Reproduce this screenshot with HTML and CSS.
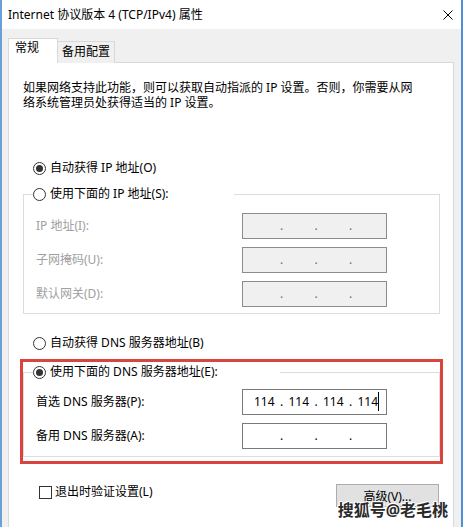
FILE: index.html
```html
<!DOCTYPE html>
<html lang="zh-CN">
<head>
<meta charset="utf-8">
<title>Internet 协议版本 4 (TCP/IPv4) 属性</title>
<link rel="stylesheet" href="styles.css">
</head>
<body>
<div class="window">
  <header class="titlebar">
    <span class="title">Internet 协议版本 4 (TCP/IPv4) 属性</span>
    <button class="close" type="button" aria-label="关闭">
      <svg width="10" height="10" viewBox="0 0 10 10"><path d="M0.5 0.5 L9.5 9.5 M9.5 0.5 L0.5 9.5" stroke="#000" stroke-width="1"/></svg>
    </button>
  </header>

  <div class="client">
    <div class="tabs">
      <div class="tab active">常规</div>
      <div class="tab">备用配置</div>
    </div>

    <div class="panel">
      <p class="desc">如果网络支持此功能，则可以获取自动指派的 IP 设置。否则，你需要从网<br>络系统管理员处获得适当的 IP 设置。</p>

      <label class="radio indent"><input type="radio" name="ip" checked><span>自动获得 IP 地址(O)</span></label>

      <fieldset class="group ip-group">
        <legend class="legend-ip"><label class="radio"><input type="radio" name="ip"><span>使用下面的 IP 地址(S):</span></label></legend>
        <div class="rows rows-ip">
          <span class="lbl disabled">IP 地址(I):</span>
          <div class="ipbox off"><span class="oct"></span><span class="dot">.</span><span class="oct"></span><span class="dot">.</span><span class="oct"></span><span class="dot">.</span><span class="oct"></span></div>
          <span class="lbl disabled">子网掩码(U):</span>
          <div class="ipbox off"><span class="oct"></span><span class="dot">.</span><span class="oct"></span><span class="dot">.</span><span class="oct"></span><span class="dot">.</span><span class="oct"></span></div>
          <span class="lbl disabled">默认网关(D):</span>
          <div class="ipbox off"><span class="oct"></span><span class="dot">.</span><span class="oct"></span><span class="dot">.</span><span class="oct"></span><span class="dot">.</span><span class="oct"></span></div>
        </div>
      </fieldset>

      <label class="radio indent dns-auto"><input type="radio" name="dns"><span>自动获得 DNS 服务器地址(B)</span></label>

      <div class="highlight">
        <fieldset class="group dns-group">
          <legend class="legend-dns"><label class="radio"><input type="radio" name="dns" checked><span>使用下面的 DNS 服务器地址(E):</span></label></legend>
          <div class="rows rows-dns">
            <span class="lbl">首选 DNS 服务器(P):</span>
            <div class="ipbox"><span class="oct">114</span><span class="dot">.</span><span class="oct">114</span><span class="dot">.</span><span class="oct">114</span><span class="dot">.</span><span class="oct last">114<i class="caret"></i></span></div>
            <span class="lbl">备用 DNS 服务器(A):</span>
            <div class="ipbox"><span class="oct"></span><span class="dot">.</span><span class="oct"></span><span class="dot">.</span><span class="oct"></span><span class="dot">.</span><span class="oct"></span></div>
          </div>
        </fieldset>
      </div>

      <div class="footer">
        <label class="check"><input type="checkbox"><span>退出时验证设置(L)</span></label>
        <button class="btn" type="button">高级(V)...</button>
      </div>
    </div>
  </div>

  <div class="watermark">搜狐号@老毛桃</div>
</div>
</body>
</html>
```

FILE: styles.css
```css
* { box-sizing: border-box; }

html, body { margin: 0; }

body {
  width: 463px;
  height: 527px;
  overflow: hidden;
  font-family: "Noto Sans", "Noto Sans CJK SC", sans-serif;
  font-size: 12px;
  color: #000;
  background: #f0f0f0;
}

/* dialog frame */
.window {
  position: relative;
  height: 527px;
  border-left: 2px solid #6a9fd8;
  border-right: 2px solid #4d8fdb;
  background: #f0f0f0;
  overflow: hidden;
}

.titlebar {
  height: 29px;
  background: #fff;
  display: flex;
  align-items: center;
  justify-content: space-between;
  padding: 0 8px 0 6px;
}

.title { line-height: 16px; }

.close {
  border: 0;
  background: none;
  padding: 0;
  width: 10px;
  height: 10px;
  display: flex;
}

/* tab strip */
.client { padding: 9px 7px 0 6px; }

.tabs {
  display: flex;
  align-items: flex-end;
  height: 25px;
}

.tab {
  width: 57px;
  height: 22px;
  border: 1px solid #d9d9d9;
  border-left: none;
  border-bottom: none;
  background: #f0f0f0;
  padding-left: 4px;
  line-height: 20px;
}

.tab.active {
  width: 50px;
  height: 25px;
  border-left: 1px solid #d9d9d9;
  background: #fff;
  padding-left: 6px;
  line-height: 18px;
  position: relative;
  z-index: 1;
}

.panel {
  margin-top: -1px;
  height: 480px;
  background: #fff;
  border: 1px solid #d9d9d9;
  padding: 17px 13px 0 14px;
}

.desc {
  margin: 0;
  line-height: 15px;
}

/* radio buttons and check box */
.radio, .check {
  display: flex;
  align-items: center;
  gap: 4px;
  height: 18px;
  line-height: 18px;
  white-space: nowrap;
}

.indent { margin-left: 10px; }
.radio.indent { margin-top: 49px; }
.radio.dns-auto { margin-top: 20px; }

input[type="radio"],
input[type="checkbox"] {
  appearance: none;
  -webkit-appearance: none;
  margin: 0;
  width: 13px;
  height: 13px;
  border: 1px solid #333;
  background: #fff;
  flex: none;
}

input[type="radio"] {
  border-radius: 50%;
  display: grid;
  place-content: center;
}

input[type="radio"]:checked::before {
  content: "";
  display: block;
  width: 7px;
  height: 7px;
  border-radius: 50%;
  background: #333;
}

/* group boxes */
.group {
  margin: 8px 0 0;
  padding: 0;
  border: 1px solid #dcdcdc;
  min-width: 0;
}

.group legend {
  padding: 0;
  margin-left: 9px;
  height: 18px;
}

.legend-ip { width: 201px; }
.legend-dns { width: 247px; }

.rows {
  display: grid;
  grid-template-columns: 1fr 145px;
  grid-auto-rows: 26px;
  row-gap: 8px;
  align-items: center;
  padding: 10px 52px 6px 12px;
}

.rows-dns { padding: 8px 52px 7px 12px; }

.lbl { white-space: nowrap; line-height: 16px; }
.lbl.disabled { color: #a0a0a0; }

/* address fields */
.ipbox {
  height: 26px;
  border: 1px solid #7a7a7a;
  background: #fff;
  display: flex;
  align-items: center;
  padding-left: 5px;
  line-height: 16px;
}

.ipbox.off {
  background: #f0f0f0;
  border-color: #8c8c8c;
}

.oct {
  width: 32.5px;
  text-align: center;
  position: relative;
}

.dot {
  width: 2px;
  display: flex;
  justify-content: center;
}

.ipbox.off .dot { color: #6d6d6d; }

.caret {
  position: absolute;
  top: -2px;
  right: 5px;
  width: 1px;
  height: 19px;
  background: #000;
}

/* annotation frame around DNS group */
.highlight {
  margin: 7px -3px 0;
  border: 3px solid #d9443c;
  padding: 1px 0 4px;
}

.dns-group { margin: 0; }

/* footer */
.footer {
  display: flex;
  justify-content: space-between;
  align-items: flex-start;
  margin-top: 20px;
  padding: 0 1px 0 16px;
}

.check { margin-top: -1px; gap: 3px; }

.btn {
  width: 103px;
  height: 23px;
  background: #e1e1e1;
  border: 1px solid #adadad;
  font: inherit;
  color: #000;
  padding: 0;
}

.watermark {
  position: absolute;
  right: 13px;
  bottom: 7px;
  font-size: 16px;
  font-weight: bold;
  line-height: 20px;
  color: #2a2a2a;
  text-shadow: 1px 0 0 #fff, -1px 0 0 #fff, 0 1px 0 #fff, 0 -1px 0 #fff, 1px 1px 0 #fff, -1px -1px 0 #fff;
}
```
